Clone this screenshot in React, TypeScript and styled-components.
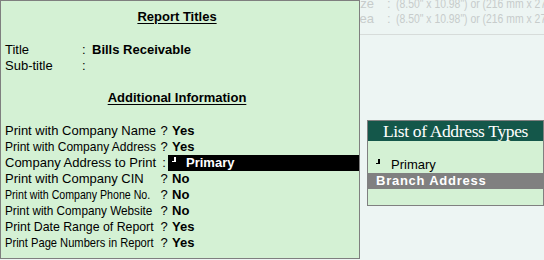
import React from 'react';
import styled, { createGlobalStyle } from 'styled-components';

const Global = createGlobalStyle`
  html, body { margin: 0; padding: 0; }
  body {
    width: 544px;
    height: 260px;
    overflow: hidden;
    background: #edf5f3;
    font-family: "Liberation Sans", Arial, sans-serif;
    font-size: 13px;
    color: #000;
  }
`;

const Screen = styled.div`
  position: relative;
  width: 544px;
  height: 260px;
  overflow: hidden;
`;

/* ---------- faded background screen ---------- */
const BgInfo = styled.div`
  margin-top: -4px;
  padding-bottom: 8px;
  border-bottom: 1px solid #d7dcda;
  color: #c7cccb;
`;

const BgRow = styled.div`
  display: grid;
  grid-template-columns: 374px 22px 1fr;
  line-height: 15px;
  height: 15px;
  white-space: nowrap;
`;

const BgLabel = styled.span`
  text-align: right;
`;

const BgColon = styled.span`
  padding-left: 13px;
`;

const BgValue = styled.span`
  display: block;
  transform: scaleX(0.8);
  transform-origin: left center;
`;

/* ---------- report titles panel ---------- */
const Panel = styled.section`
  position: absolute;
  left: 0;
  top: 0;
  width: 360px;
  height: 259px;
  box-sizing: border-box;
  border: 1px solid #7f7f7f;
  background: #d4f1d4;
  padding: 8px 0 0 4px;
`;

const Heading = styled.div<{ $gap: number }>`
  margin-top: ${(p) => p.$gap}px;
  padding-right: 10px;
  text-align: center;
  font-weight: bold;
  line-height: 16px;
  height: 16px;

  span {
    text-decoration: underline;
    text-decoration-thickness: 1px;
    text-underline-offset: 2px;
  }
`;

const TitleBlock = styled.div`
  margin-top: 17px;
`;

const TitleRow = styled.div`
  display: grid;
  grid-template-columns: 77px 10px 1fr;
  height: 16px;
  line-height: 16px;
  white-space: nowrap;
`;

const TitleValue = styled.span`
  font-weight: bold;
`;

const Options = styled.div`
  margin-top: 17px;
`;

const OptionRow = styled.div`
  display: grid;
  grid-template-columns: 155px 8px 1fr;
  height: 16px;
  line-height: 16px;
  white-space: nowrap;
`;

const OptionLabel = styled.span<{ $squeeze: number }>`
  display: inline-block;
  transform: scaleX(${(p) => p.$squeeze});
  transform-origin: left center;
`;

const Sep = styled.span`
  text-align: center;
`;

const OptionValue = styled.span<{ $selected?: boolean }>`
  display: flex;
  align-items: flex-start;
  padding-left: 4px;
  font-weight: bold;
  background: ${(p) => (p.$selected ? '#000' : 'transparent')};
  color: ${(p) => (p.$selected ? '#fff' : '#000')};
`;

const Corner = styled.span<{ $color: string; $top: number; $gap: number }>`
  flex: none;
  box-sizing: border-box;
  width: 4px;
  height: 5px;
  margin-top: ${(p) => p.$top}px;
  margin-right: ${(p) => p.$gap}px;
  border-right: 2px solid ${(p) => p.$color};
  border-bottom: 1px solid ${(p) => p.$color};
`;

/* ---------- list popup ---------- */
const Popup = styled.aside`
  position: absolute;
  left: 367px;
  top: 120px;
  width: 177px;
  height: 86px;
  box-sizing: border-box;
  border: 1px solid #808080;
  background: #d4f1d4;
`;

const PopupTitle = styled.div`
  height: 20px;
  line-height: 20px;
  background: #14574a;
  color: #fff;
  text-align: center;
  font-family: "Liberation Serif", "Times New Roman", serif;
  font-size: 17.5px;
  letter-spacing: -0.35px;
  white-space: nowrap;
`;

const List = styled.div`
  padding-top: 15px;
`;

const ListItem = styled.div<{ $active?: boolean; $h: number }>`
  display: flex;
  align-items: flex-start;
  height: ${(p) => p.$h}px;
  line-height: ${(p) => p.$h}px;
  padding-left: 8px;
  white-space: nowrap;
  background: ${(p) => (p.$active ? '#808080' : 'transparent')};
  color: ${(p) => (p.$active ? '#fff' : '#000')};
  font-weight: ${(p) => (p.$active ? 'bold' : 'normal')};
  letter-spacing: ${(p) => (p.$active ? '0.75px' : 'normal')};
`;

type Option = {
  label: string;
  sep: string;
  value: string;
  squeeze: number;
  selected?: boolean;
};

const options: Option[] = [
  { label: 'Print with Company Name', sep: '?', value: 'Yes', squeeze: 1 },
  { label: 'Print with Company Address', sep: '?', value: 'Yes', squeeze: 0.924 },
  { label: 'Company Address to Print', sep: ':', value: 'Primary', squeeze: 1, selected: true },
  { label: 'Print with Company CIN', sep: '?', value: 'No', squeeze: 1 },
  { label: 'Print with Company Phone No.', sep: '?', value: 'No', squeeze: 0.817 },
  { label: 'Print with Company Website', sep: '?', value: 'No', squeeze: 0.904 },
  { label: 'Print Date Range of Report', sep: '?', value: 'Yes', squeeze: 0.948 },
  { label: 'Print Page Numbers in Report', sep: '?', value: 'Yes', squeeze: 0.857 },
];

export default function App() {
  return (
    <Screen>
      <Global />
      <BgInfo>
        <BgRow>
          <BgLabel>Paper Size</BgLabel>
          <BgColon>:</BgColon>
          <BgValue>(8.50" x 10.98") or (216 mm x 279 mm)</BgValue>
        </BgRow>
        <BgRow>
          <BgLabel>Printable Area</BgLabel>
          <BgColon>:</BgColon>
          <BgValue>(8.50" x 10.98") or (216 mm x 279 mm)</BgValue>
        </BgRow>
      </BgInfo>

      <Panel>
        <Heading $gap={0}>
          <span>Report Titles</span>
        </Heading>
        <TitleBlock>
          <TitleRow>
            <span>Title</span>
            <span>:</span>
            <TitleValue>Bills Receivable</TitleValue>
          </TitleRow>
          <TitleRow>
            <span>Sub-title</span>
            <span>:</span>
            <TitleValue />
          </TitleRow>
        </TitleBlock>
        <Heading $gap={16}>
          <span>Additional Information</span>
        </Heading>
        <Options>
          {options.map((o) => (
            <OptionRow key={o.label}>
              <span>
                <OptionLabel $squeeze={o.squeeze}>{o.label}</OptionLabel>
              </span>
              <Sep>{o.sep}</Sep>
              <OptionValue $selected={o.selected}>
                {o.selected && <Corner $color="#fff" $top={2} $gap={10} />}
                {o.value}
              </OptionValue>
            </OptionRow>
          ))}
        </Options>
      </Panel>

      <Popup>
        <PopupTitle>List of Address Types</PopupTitle>
        <List>
          <ListItem $h={17}>
            <Corner $color="#000" $top={3} $gap={11} />
            Primary
          </ListItem>
          <ListItem $h={16} $active>
            Branch Address
          </ListItem>
        </List>
      </Popup>
    </Screen>
  );
}
